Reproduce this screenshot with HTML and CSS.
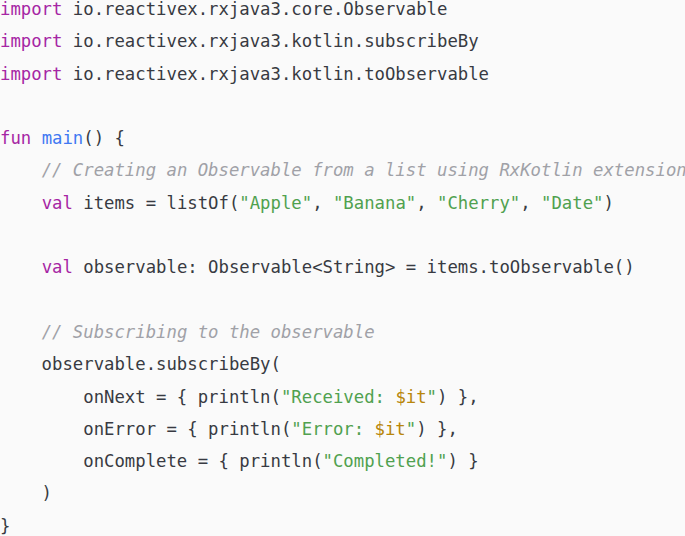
FILE: index.html
```html
<!DOCTYPE html>
<html>
<head>
<meta charset="utf-8">
<link rel="stylesheet" href="styles.css">
</head>
<body>
<pre class="code"><code><span class="kw">import</span> io.reactivex.rxjava3.core.Observable
<span class="kw">import</span> io.reactivex.rxjava3.kotlin.subscribeBy
<span class="kw">import</span> io.reactivex.rxjava3.kotlin.toObservable

<span class="kw">fun</span> <span class="fn">main</span>() {
    <span class="cm">// Creating an Observable from a list using RxKotlin extension</span>
    <span class="kw">val</span> items = listOf(<span class="str">"Apple"</span>, <span class="str">"Banana"</span>, <span class="str">"Cherry"</span>, <span class="str">"Date"</span>)

    <span class="kw">val</span> observable: Observable&lt;String&gt; = items.toObservable()

    <span class="cm">// Subscribing to the observable</span>
    observable.subscribeBy(
        onNext = { println(<span class="str">"Received: <span class="var">$it</span>"</span>) },
        onError = { println(<span class="str">"Error: <span class="var">$it</span>"</span>) },
        onComplete = { println(<span class="str">"Completed!"</span>) }
    )
}</code></pre>
</body>
</html>
```
FILE: styles.css
```css
html, body {
  margin: 0;
  padding: 0;
  background: #fafafa;
}
.code {
  margin: -7px 0 0 0;
  padding: 0;
  font-family: "DejaVu Sans Mono", "Liberation Mono", monospace;
  font-size: 17.3px;
  line-height: 32.3px;
  color: #383a42;
  white-space: pre;
}
.kw { color: #a626a4; }
.fn { color: #4078f2; }
.str { color: #50a14f; }
.var { color: #b8860b; }
.cm { color: #a0a1a7; font-style: italic; }
```
